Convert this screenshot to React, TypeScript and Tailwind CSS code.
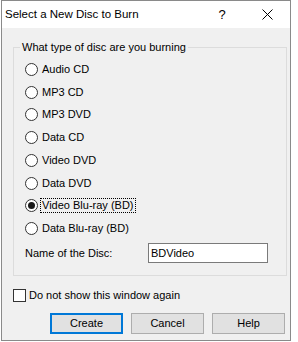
import React from "react";

const OPTIONS = [
  "Audio CD",
  "MP3 CD",
  "MP3 DVD",
  "Data CD",
  "Video DVD",
  "Data DVD",
  "Video Blu-ray (BD)",
  "Data Blu-ray (BD)",
];

function Radio({ checked }: { checked?: boolean }) {
  return (
    <span className="flex h-[13px] w-[13px] shrink-0 items-center justify-center rounded-full border border-[#333] bg-white">
      {checked && <span className="h-[7px] w-[7px] rounded-full bg-[#1a1a1a]" />}
    </span>
  );
}

function Btn({ label, primary }: { label: string; primary?: boolean }) {
  return (
    <button
      className={`flex h-[21px] w-[73px] items-center justify-center bg-[#e1e1e1] text-[11px] text-black ${
        primary ? "border-2 border-[#0078d7]" : "border border-[#adadad]"
      }`}
    >
      {label}
    </button>
  );
}

export default function App() {
  const selected = "Video Blu-ray (BD)";

  return (
    <div className="h-[342px] w-[298px] bg-white font-['Liberation_Sans',Arial,sans-serif] text-black">
      <div className="ml-px flex h-[341px] w-[290px] flex-col border border-[#8a8a8a] bg-[#f0f0f0]">
        {/* title bar */}
        <div className="flex h-[27px] shrink-0 items-center bg-white">
          <span className="pl-[3px] text-[11.5px]">Select a New Disc to Burn</span>
          <span className="ml-auto flex w-[46px] justify-center text-[13px]">?</span>
          <span className="flex w-[45px] justify-center">
            <svg width="11" height="11" viewBox="0 0 11 11">
              <path d="M0.5 0.5 L10.5 10.5 M10.5 0.5 L0.5 10.5" stroke="#000" strokeWidth="1" />
            </svg>
          </span>
        </div>

        <div className="flex flex-col pl-[11px] text-[11px]">
          {/* group box */}
          <div className="relative mt-[19px] h-[229px] w-[274px] border border-[#dcdcdc]">
            <span className="absolute -top-[8px] left-[6px] bg-[#f0f0f0] px-[2px] leading-[14px]">
              What type of disc are you burning
            </span>
            <div className="flex h-[182px] flex-col pl-[11px] pt-[10px]">
              {OPTIONS.map((o) => (
                <div key={o} className="flex h-[22.75px] shrink-0 items-center">
                  <Radio checked={o === selected} />
                  <span
                    className={`ml-[2px] leading-[13px] ${
                      o === selected ? "border border-dotted border-black px-px" : "border border-transparent px-px"
                    }`}
                  >
                    {o}
                  </span>
                </div>
              ))}
            </div>
            <div className="mt-[13px] flex items-center pl-[11px]">
              <span className="w-[123px]">Name of the Disc:</span>
              <div className="flex h-[20px] w-[120px] items-center border border-[#7a7a7a] bg-white pl-[2px]">
                BDVideo
              </div>
            </div>
          </div>

          {/* checkbox */}
          <div className="mt-[11px] flex items-center">
            <span className="h-[13px] w-[13px] border border-[#333] bg-white" />
            <span className="ml-[3px]">Do not show this window again</span>
          </div>

          {/* buttons */}
          <div className="mt-[9px] flex gap-[8px] pl-[37px]">
            <Btn label="Create" primary />
            <Btn label="Cancel" />
            <Btn label="Help" />
          </div>
        </div>
      </div>
    </div>
  );
}
